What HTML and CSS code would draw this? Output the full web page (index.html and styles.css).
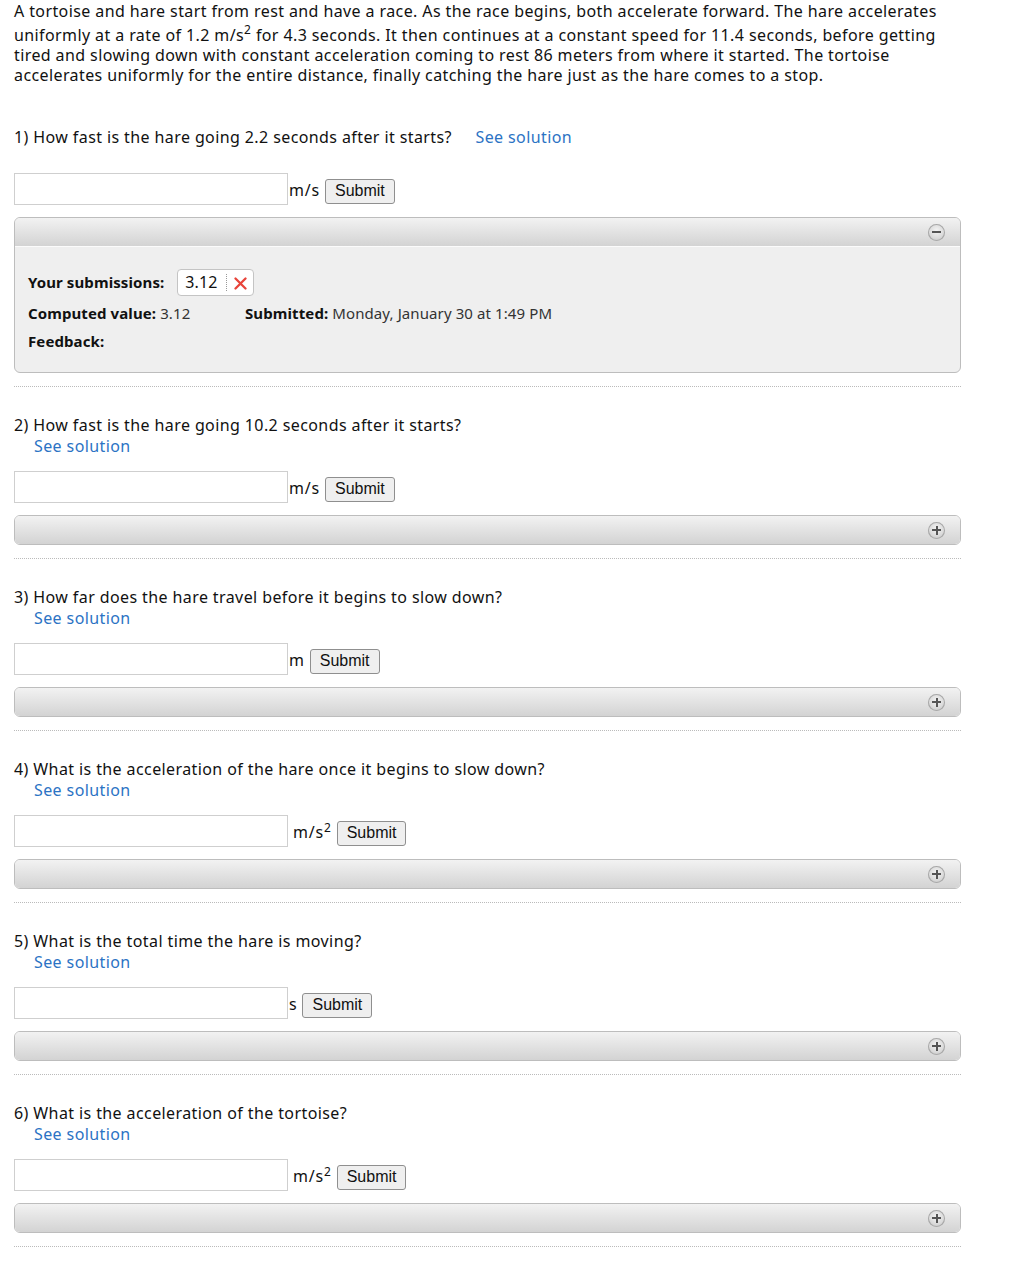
FILE: index.html
```html
<!DOCTYPE html>
<html>
<head>
<meta charset="utf-8">
<link rel="stylesheet" href="styles.css">
</head>
<body>
<div class="page">
  <p class="intro">A tortoise and hare start from rest and have a race. As the race begins, both accelerate forward. The hare accelerates uniformly at a rate of 1.2 m/s<sup>2</sup> for 4.3 seconds. It then continues at a constant speed for 11.4 seconds, before getting tired and slowing down with constant acceleration coming to rest 86 meters from where it started. The tortoise accelerates uniformly for the entire distance, finally catching the hare just as the hare comes to a stop.</p>

  <section class="q q-first">
    <div class="q-text">1) How fast is the hare going 2.2 seconds after it starts? <a class="sol sol-inline">See solution</a></div>
    <div class="answer"><input class="field" type="text"><span class="unit">m/s</span><button class="submit">Submit</button></div>
    <div class="panel open">
      <div class="panel-head"><span class="toggle minus"></span></div>
      <div class="panel-body">
        <div class="row"><b>Your submissions:</b><span class="chip"><span class="chip-val">3.12</span><svg class="chip-x" width="13" height="13" viewBox="0 0 13 13"><path d="M1.5 1.5 L11.5 11.5 M11.5 1.5 L1.5 11.5" stroke="#e8443a" stroke-width="2.3" stroke-linecap="round" fill="none"/></svg></span></div>
        <div class="row"><span class="cv"><b>Computed value:</b> 3.12</span><span><b>Submitted:</b> Monday, January 30 at 1:49 PM</span></div>
        <div class="row"><b>Feedback:</b></div>
      </div>
    </div>
  </section>

  <section class="q">
    <div class="q-text">2) How fast is the hare going 10.2 seconds after it starts?<br><a class="sol">See solution</a></div>
    <div class="answer"><input class="field" type="text"><span class="unit">m/s</span><button class="submit">Submit</button></div>
    <div class="panel"><div class="panel-head"><span class="toggle plus"></span></div></div>
  </section>

  <section class="q">
    <div class="q-text">3) How far does the hare travel before it begins to slow down?<br><a class="sol">See solution</a></div>
    <div class="answer"><input class="field" type="text"><span class="unit">m</span><button class="submit">Submit</button></div>
    <div class="panel"><div class="panel-head"><span class="toggle plus"></span></div></div>
  </section>

  <section class="q">
    <div class="q-text">4) What is the acceleration of the hare once it begins to slow down?<br><a class="sol">See solution</a></div>
    <div class="answer"><input class="field" type="text"><span class="unit unit-sq">m/s<sup>2</sup></span><button class="submit">Submit</button></div>
    <div class="panel"><div class="panel-head"><span class="toggle plus"></span></div></div>
  </section>

  <section class="q">
    <div class="q-text">5) What is the total time the hare is moving?<br><a class="sol">See solution</a></div>
    <div class="answer"><input class="field" type="text"><span class="unit">s</span><button class="submit">Submit</button></div>
    <div class="panel"><div class="panel-head"><span class="toggle plus"></span></div></div>
  </section>

  <section class="q">
    <div class="q-text">6) What is the acceleration of the tortoise?<br><a class="sol">See solution</a></div>
    <div class="answer"><input class="field" type="text"><span class="unit unit-sq">m/s<sup>2</sup></span><button class="submit">Submit</button></div>
    <div class="panel"><div class="panel-head"><span class="toggle plus"></span></div></div>
  </section>
</div>
</body>
</html>
```

FILE: styles.css
```css
html, body {
  margin: 0;
  padding: 0;
  background: #fff;
}
body {
  font-family: "Noto Sans", "DejaVu Sans", sans-serif;
  font-size: 16px;
  letter-spacing: 0.4px;
  color: #111;
}
.page {
  width: 947px;
  padding: 0 0 0 14px;
}
.intro {
  margin: 0;
  padding-top: 1px;
  line-height: 20px;
}
.intro sup {
  font-size: 12px;
  line-height: 18px;
  vertical-align: 7px;
}
.q {
  border-bottom: 1px dotted #bbb;
  padding-top: 28px;
  padding-bottom: 13px;
}
.q-first {
  padding-top: 42px;
}
.q-text {
  line-height: 21px;
}
.sol {
  color: #2b73c4;
  margin-left: 20px;
  cursor: pointer;
}
.sol-inline {
  margin-left: 19px;
}
.q-first .answer {
  margin-top: 25px;
}
.answer {
  display: flex;
  align-items: center;
  margin-top: 14px;
  height: 32px;
}
.field {
  box-sizing: border-box;
  width: 274px;
  height: 32px;
  border: 1px solid #cfcfcf;
  margin: 0;
  padding: 0 4px;
  font-size: 16px;
}
.unit {
  margin: 2px 5px 0 1px;
  letter-spacing: 0.8px;
}
.unit-sq {
  margin-left: 5px;
}
.unit-sq sup {
  font-size: 12px;
  line-height: 0;
  vertical-align: 6px;
}
.submit {
  box-sizing: border-box;
  height: 25px;
  margin-top: 4px;
  padding: 0 9px;
  font-family: "Liberation Sans", Arial, sans-serif;
  font-size: 16px;
  letter-spacing: 0;
  color: #111;
  background: #efefef;
  border: 1px solid #8f8f8f;
  border-radius: 3px;
}
.panel {
  margin-top: 12px;
  border: 1px solid #bdbdbd;
  border-radius: 6px;
  background: #efefef;
  overflow: hidden;
}
.q-first .panel {
  margin-top: 12px;
}
.panel-head {
  height: 28px;
  background: linear-gradient(#f2f2f2, #d3d3d3);
  display: flex;
  justify-content: flex-end;
  align-items: center;
  padding-right: 15px;
}
.open .panel-head {
  border-bottom: 1px solid #fbfbfb;
}
.toggle {
  width: 17px;
  height: 17px;
  border-radius: 50%;
  background: radial-gradient(circle at 50% 40%, #f4f4f4 0%, #dadada 55%, #b8b8b8 100%);
  box-shadow: inset 0 0 0 1px #a8a8a8;
  position: relative;
}
.toggle::before, .plus::after {
  content: "";
  position: absolute;
  background: #555;
  left: 4px;
  top: 7.5px;
  width: 9px;
  height: 2px;
}
.plus::after {
  left: 7.5px;
  top: 4px;
  width: 2px;
  height: 9px;
}
.panel-body {
  padding: 20px 13px 17px;
  font-size: 15px;
  letter-spacing: 0.1px;
  color: #111;
}
.panel-body b {
  font-weight: 700;
}
.row {
  display: flex;
  align-items: center;
  min-height: 28px;
}
.row:first-child {
  min-height: 30px;
  margin-bottom: 2px;
}
.row span {
  color: #333;
}
.row b {
  color: #111;
}
.cv {
  width: 217px;
}
.chip {
  display: inline-flex;
  align-items: center;
  margin-left: 13px;
  height: 27px;
  box-sizing: border-box;
  border: 1px solid #c4c4c4;
  border-radius: 4px;
  background: #fff;
  padding: 0 6px 0 7px;
  font-size: 16px;
}
.chip .chip-val {
  color: #111;
  padding-right: 8px;
  border-right: 1px dotted #999;
  line-height: 17px;
}
.chip-x {
  margin-left: 7px;
  margin-top: 2px;
}
```
